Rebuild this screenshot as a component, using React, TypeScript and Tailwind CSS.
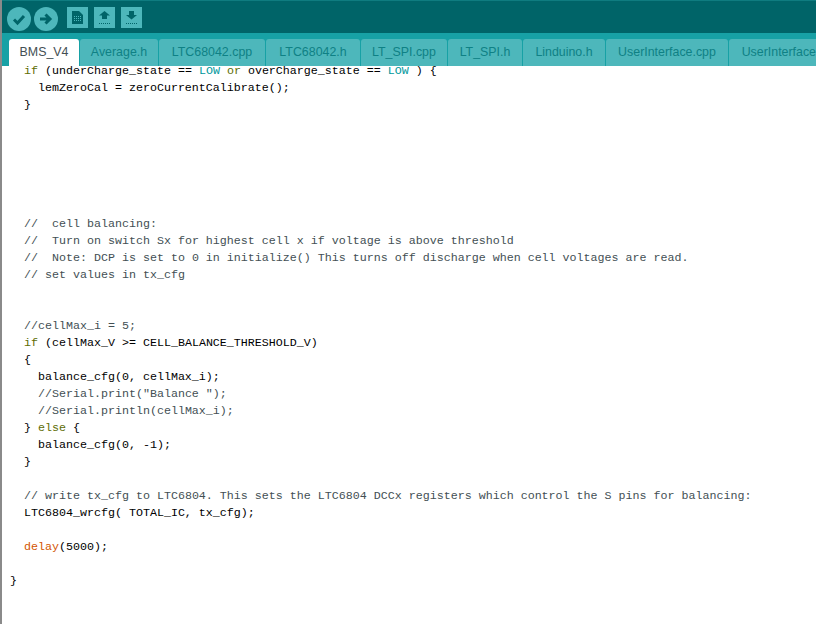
const TABS = [
  { label: "Average.h", w: "w-[78px]" },
  { label: "LTC68042.cpp", w: "w-[106px]" },
  { label: "LTC68042.h", w: "w-[94px]" },
  { label: "LT_SPI.cpp", w: "w-[86px]" },
  { label: "LT_SPI.h", w: "w-[74px]" },
  { label: "Linduino.h", w: "w-[82px]" },
  { label: "UserInterface.cpp", w: "w-[122px]" },
  { label: "UserInterface.h", w: "w-[110px]" },
];

function Kw({ children }: { children: React.ReactNode }) {
  return <span className="text-[#5e6d03]">{children}</span>;
}
function Const({ children }: { children: React.ReactNode }) {
  return <span className="text-[#00979c]">{children}</span>;
}
function Fn({ children }: { children: React.ReactNode }) {
  return <span className="text-[#d35400]">{children}</span>;
}
function Cm({ children }: { children: React.ReactNode }) {
  return <span className="text-[#434f54]">{children}</span>;
}

const LINES: React.ReactNode[] = [
  <>  <Kw>if</Kw> (underCharge_state == <Const>LOW</Const> <Kw>or</Kw> overCharge_state == <Const>LOW</Const> ) {"{"}</>,
  <>    lemZeroCal = zeroCurrentCalibrate();</>,
  <>  {"}"}</>,
  "", "", "", "", "", "",
  <>  <Cm>//  cell balancing:</Cm></>,
  <>  <Cm>//  Turn on switch Sx for highest cell x if voltage is above threshold</Cm></>,
  <>  <Cm>//  Note: DCP is set to 0 in initialize() This turns off discharge when cell voltages are read.</Cm></>,
  <>  <Cm>// set values in tx_cfg</Cm></>,
  "", "",
  <>  <Cm>//cellMax_i = 5;</Cm></>,
  <>  <Kw>if</Kw> (cellMax_V &gt;= CELL_BALANCE_THRESHOLD_V)</>,
  <>  {"{"}</>,
  <>    balance_cfg(0, cellMax_i);</>,
  <>    <Cm>//Serial.print("Balance ");</Cm></>,
  <>    <Cm>//Serial.println(cellMax_i);</Cm></>,
  <>  {"}"} <Kw>else</Kw> {"{"}</>,
  <>    balance_cfg(0, -1);</>,
  <>  {"}"}</>,
  "",
  <>  <Cm>// write tx_cfg to LTC6804. This sets the LTC6804 DCCx registers which control the S pins for balancing:</Cm></>,
  <>  LTC6804_wrcfg( TOTAL_IC, tx_cfg);</>,
  "",
  <>  <Fn>delay</Fn>(5000);</>,
  "",
  <>{"}"}</>,
];

function RoundBtn({ children }: { children: React.ReactNode }) {
  return (
    <div className="w-6 h-6 rounded-full bg-[#4db7bb] flex items-center justify-center">
      <svg width="24" height="24" viewBox="0 0 24 24" fill="none" stroke="#006468" strokeWidth="3">
        {children}
      </svg>
    </div>
  );
}

function SquareBtn({ children }: { children: React.ReactNode }) {
  return (
    <div className="w-[21px] h-[21px] bg-[#4db7bb]">
      <svg width="21" height="21" viewBox="0 0 21 21" fill="#006468">
        {children}
      </svg>
    </div>
  );
}

const DOTS = "M5 16h1v1H5zM7 16h1v1H7zM9 16h1v1H9zM11 16h1v1h-1zM13 16h1v1h-1zM15 16h1v1h-1z";

export default function App() {
  return (
    <div className="w-[816px] h-[624px] overflow-hidden flex flex-col bg-white border-l-2 border-[#8a8a8a]">
      <div className="h-[33px] bg-[#006468] border-t border-[#0f7c80] flex items-start pt-[6px] pl-[5px] shrink-0">
        <div className="flex gap-[3px]">
          <RoundBtn>
            <path d="M7 12.5l3.5 3.5L17 9" />
          </RoundBtn>
          <RoundBtn>
            <path d="M6 12h9M11.5 7.5L16 12l-4.5 4.5" />
          </RoundBtn>
        </div>
        <div className="flex gap-[6px] ml-[9px]">
          <SquareBtn>
            <path d="M5 4h7l4 4v9H5z" />
            <path fill="#4db7bb" d="M7 9h1v1H7zM9 9h1v1H9zM11 9h1v1h-1zM13 9h1v1h-1zM7 11h1v1H7zM9 11h1v1H9zM11 11h1v1h-1zM13 11h1v1h-1zM7 13h1v1H7zM9 13h1v1H9zM11 13h1v1h-1zM13 13h1v1h-1z" />
          </SquareBtn>
          <SquareBtn>
            <path d="M10.5 4L16 8.5h-3V12H8V8.5H5z" />
            <path d={DOTS} />
          </SquareBtn>
          <SquareBtn>
            <path d="M8 4h5v4h3l-5.5 4.5L5 8h3z" />
            <path d={DOTS} />
          </SquareBtn>
        </div>
      </div>
      <div className="h-[33px] bg-[#17a1a5] pt-[6px] pl-[7px] flex shrink-0 font-['Liberation_Sans',sans-serif] text-[12.4px]">
        <div className="w-[70px] h-[27px] bg-white rounded-t-[3px] flex items-center justify-center text-[#434f54] shrink-0">
          BMS_V4
        </div>
        {TABS.map((t) => (
          <div
            key={t.label}
            className={`${t.w} h-[27px] ml-px bg-[#4db7bb] rounded-t-[3px] flex items-center justify-center text-[#0f8185] shrink-0 whitespace-nowrap`}
          >
            {t.label}
          </div>
        ))}
      </div>
      <div className="flex-1 overflow-hidden pl-[8px] font-['Liberation_Mono',monospace] text-[11.67px] leading-[17px] text-[#000000] -mt-[3px] whitespace-pre">
        {LINES.map((l, i) => (
          <div key={i} className="h-[17px]">
            {l}
          </div>
        ))}
      </div>
    </div>
  );
}
